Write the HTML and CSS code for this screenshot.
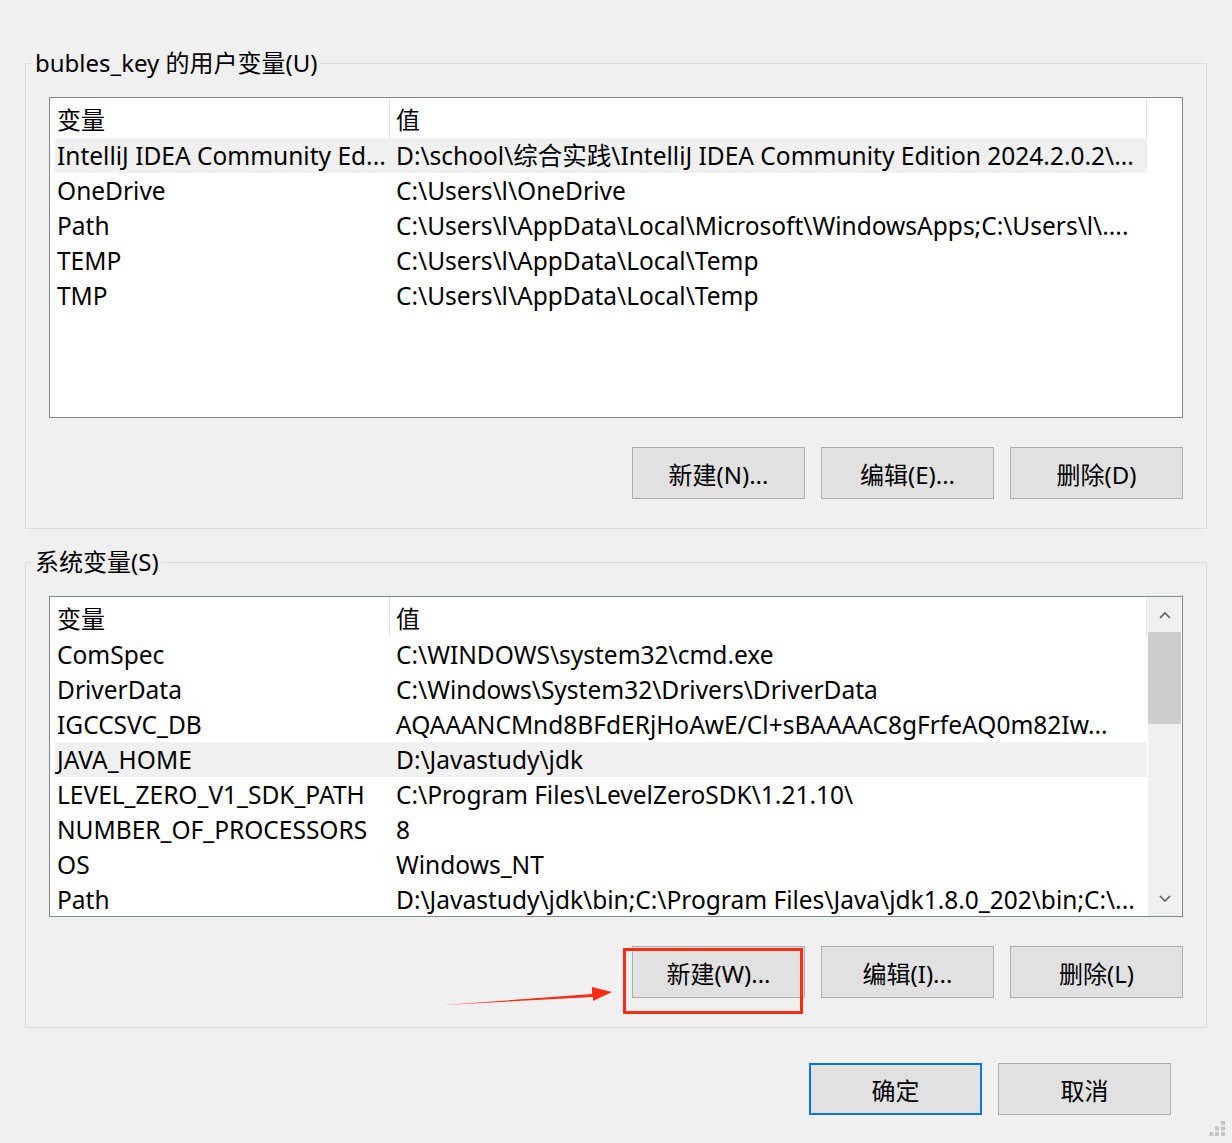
FILE: index.html
```html
<!DOCTYPE html>
<html lang="zh-CN">
<head>
    <meta charset="UTF-8">
    <title>环境变量</title>
    <link rel="stylesheet" href="styles.css">
</head>
<body>
    <div class="dialog">
        <div class="group">
            <div class="group-title">bubles_key 的用户变量(U)</div>
            <div class="list">
                <div class="list-table">
                    <div class="list-head">
                        <div class="head-cell col-name">变量</div>
                        <div class="head-cell col-value">值</div>
                    </div>
                    <div class="row selected">
                        <div class="cell col-name">IntelliJ IDEA Community Ed...</div>
                        <div class="cell col-value">D:\school\综合实践\IntelliJ IDEA Community Edition 2024.2.0.2\...</div>
                    </div>
                    <div class="row">
                        <div class="cell col-name">OneDrive</div>
                        <div class="cell col-value">C:\Users\l\OneDrive</div>
                    </div>
                    <div class="row">
                        <div class="cell col-name">Path</div>
                        <div class="cell col-value">C:\Users\l\AppData\Local\Microsoft\WindowsApps;C:\Users\l\....</div>
                    </div>
                    <div class="row">
                        <div class="cell col-name">TEMP</div>
                        <div class="cell col-value">C:\Users\l\AppData\Local\Temp</div>
                    </div>
                    <div class="row">
                        <div class="cell col-name">TMP</div>
                        <div class="cell col-value">C:\Users\l\AppData\Local\Temp</div>
                    </div>
                </div>
            </div>
            <div class="button-row">
                <button class="btn">新建(N)...</button>
                <button class="btn">编辑(E)...</button>
                <button class="btn">删除(D)</button>
            </div>
        </div>

        <div class="group group-system">
            <div class="group-title">系统变量(S)</div>
            <div class="list">
                <div class="list-table">
                    <div class="list-head">
                        <div class="head-cell col-name">变量</div>
                        <div class="head-cell col-value">值</div>
                    </div>
                    <div class="row">
                        <div class="cell col-name">ComSpec</div>
                        <div class="cell col-value">C:\WINDOWS\system32\cmd.exe</div>
                    </div>
                    <div class="row">
                        <div class="cell col-name">DriverData</div>
                        <div class="cell col-value">C:\Windows\System32\Drivers\DriverData</div>
                    </div>
                    <div class="row">
                        <div class="cell col-name">IGCCSVC_DB</div>
                        <div class="cell col-value">AQAAANCMnd8BFdERjHoAwE/Cl+sBAAAAC8gFrfeAQ0m82Iw...</div>
                    </div>
                    <div class="row selected">
                        <div class="cell col-name">JAVA_HOME</div>
                        <div class="cell col-value">D:\Javastudy\jdk</div>
                    </div>
                    <div class="row">
                        <div class="cell col-name">LEVEL_ZERO_V1_SDK_PATH</div>
                        <div class="cell col-value">C:\Program Files\LevelZeroSDK\1.21.10\</div>
                    </div>
                    <div class="row">
                        <div class="cell col-name">NUMBER_OF_PROCESSORS</div>
                        <div class="cell col-value">8</div>
                    </div>
                    <div class="row">
                        <div class="cell col-name">OS</div>
                        <div class="cell col-value">Windows_NT</div>
                    </div>
                    <div class="row">
                        <div class="cell col-name">Path</div>
                        <div class="cell col-value">D:\Javastudy\jdk\bin;C:\Program Files\Java\jdk1.8.0_202\bin;C:\...</div>
                    </div>
                </div>
                <div class="scrollbar">
                    <div class="scroll-arrow">
                        <svg width="12" height="8" viewBox="0 0 12 8"><polyline points="1,7 6,2 11,7" fill="none" stroke="#606060" stroke-width="1.6"/></svg>
                    </div>
                    <div class="scroll-thumb"></div>
                    <div class="scroll-track"></div>
                    <div class="scroll-arrow">
                        <svg width="12" height="8" viewBox="0 0 12 8"><polyline points="1,1 6,6 11,1" fill="none" stroke="#606060" stroke-width="1.6"/></svg>
                    </div>
                </div>
            </div>
            <div class="button-row">
                <button class="btn">新建(W)...</button>
                <button class="btn">编辑(I)...</button>
                <button class="btn">删除(L)</button>
            </div>
        </div>

        <div class="footer-row">
            <button class="btn btn-default">确定</button>
            <button class="btn">取消</button>
        </div>

        <!-- annotation drawn over the screenshot -->
        <div class="mark-box"></div>
        <svg class="mark-arrow" width="180" height="30" viewBox="0 0 180 30">
            <polygon points="5,20 152,9 152,2 172,7 153,16 153,12" fill="#ff2a14"/>
        </svg>

        <svg class="grip" width="20" height="20" viewBox="0 0 20 20">
            <rect x="12" y="1" width="4" height="4" fill="#c3c3c3"/>
            <rect x="6" y="6.5" width="4" height="4" fill="#c3c3c3"/>
            <rect x="12" y="6.5" width="4" height="4" fill="#c3c3c3"/>
            <rect x="0.5" y="12" width="4" height="4" fill="#c3c3c3"/>
            <rect x="6" y="12" width="4" height="4" fill="#c3c3c3"/>
            <rect x="12" y="12" width="4" height="4" fill="#c3c3c3"/>
        </svg>
    </div>
</body>
</html>
```

FILE: styles.css
```css
:root {
    --bg: #f0f0f0;
    --group-border: #dcdcdc;
    --list-border: #828790;
    --btn-bg: #e1e1e1;
    --btn-border: #adadad;
    --accent: #0078d7;
    --mark: #ff2a14;
}
html, body {
    margin: 0;
    padding: 0;
    background: var(--bg);
    font-family: "Noto Sans", "Noto Sans CJK SC", sans-serif;
    font-size: 24px;
    color: #000;
}
.dialog {
    position: relative;
    width: 1232px;
    height: 1143px;
    box-sizing: border-box;
    padding: 63px 25px 0 25px;
    overflow: hidden;
}
.group {
    border: 1px solid var(--group-border);
    padding: 0 23px 29px 23px;
}
.group-system {
    margin-top: 33px;
}
.group-title {
    width: max-content;
    margin: -17px 0 0 -16px;
    padding: 0 2px;
    line-height: 32px;
    height: 32px;
    background: var(--bg);
}
.list {
    display: flex;
    margin-top: 18px;
    height: 321px;
    box-sizing: border-box;
    border: 1px solid var(--list-border);
    background: #fff;
    overflow: hidden;
}
.list-table {
    width: 1097px;
    flex: none;
}
.list-head {
    display: flex;
    height: 40px;
    line-height: 44px;
}
.head-cell {
    box-sizing: border-box;
    border-right: 1px solid #e5e5e5;
    white-space: nowrap;
}
.list-head .col-name {
    width: 340px;
    padding-left: 7px;
}
.list-head .col-value {
    width: 757px;
    padding-left: 6px;
}
.row {
    display: flex;
    height: 35px;
    line-height: 35px;
    margin-left: 5px;
    font-size: 24.5px;
}
.row.selected {
    background: #f0f0f0;
}
.cell {
    box-sizing: border-box;
    white-space: nowrap;
    overflow: hidden;
}
.row .col-name {
    width: 335px;
    padding-left: 2px;
}
.row .col-value {
    width: 757px;
    padding-left: 6px;
}
.scrollbar {
    width: 33px;
    margin-left: 1px;
    display: flex;
    flex-direction: column;
    background: var(--bg);
}
.scroll-arrow {
    height: 35px;
    display: flex;
    align-items: center;
    justify-content: center;
}
.scroll-thumb {
    height: 92px;
    background: #cdcdcd;
}
.scroll-track {
    flex: 1;
}
.button-row {
    display: flex;
    justify-content: flex-end;
    gap: 16px;
    margin-top: 29px;
}
.btn {
    width: 173px;
    height: 52px;
    box-sizing: border-box;
    border: 1px solid var(--btn-border);
    background: var(--btn-bg);
    font-family: inherit;
    font-size: 24px;
    color: #000;
    padding: 0;
    margin: 0;
}
.btn-default {
    border: 2px solid var(--accent);
}
.footer-row {
    display: flex;
    justify-content: flex-end;
    gap: 16px;
    margin-top: 35px;
    padding-right: 36px;
}
.mark-box {
    position: absolute;
    left: 623px;
    top: 948px;
    width: 180px;
    height: 66px;
    box-sizing: border-box;
    border: 3px solid var(--mark);
}
.mark-arrow {
    position: absolute;
    left: 440px;
    top: 985px;
}
.grip {
    position: absolute;
    right: 3px;
    bottom: 3px;
}
```
